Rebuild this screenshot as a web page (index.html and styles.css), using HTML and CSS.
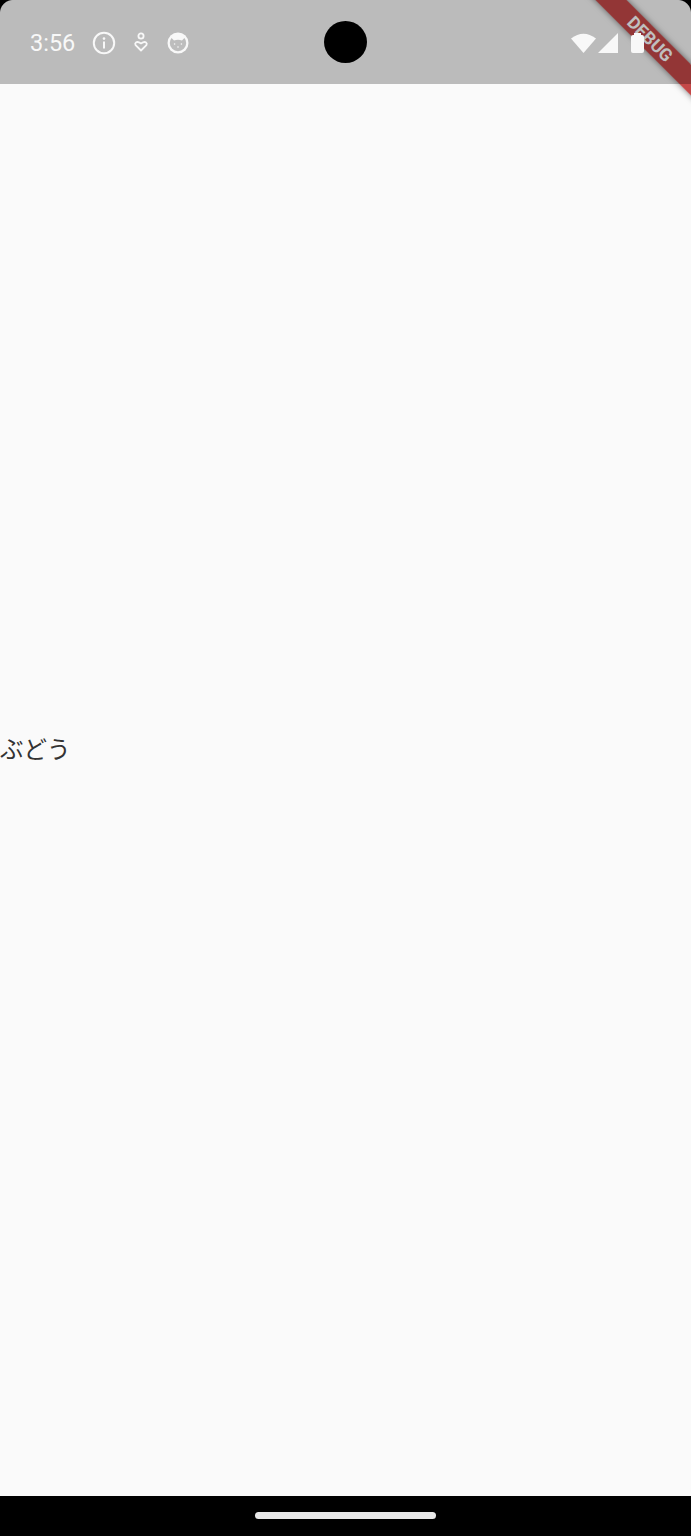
FILE: index.html
```html
<!DOCTYPE html>
<html lang="ja">
<head>
    <meta charset="UTF-8">
    <title>ぶどう</title>
    <link rel="stylesheet" href="styles.css">
</head>
<body>
    <div class="screen">
        <main class="app">
            <div class="word">ぶどう</div>
            <div class="debug-ribbon">DEBUG</div>
        </main>

        <div class="status-bar">
            <div class="status-left">
                <span class="clock">3:56</span>
                <svg class="icon" width="24" height="24" viewBox="0 0 24 24">
                    <circle cx="12" cy="12" r="10.2" fill="none" stroke="#f8f8f8" stroke-width="2"/>
                    <rect x="11" y="10.5" width="2" height="7" fill="#f8f8f8"/>
                    <circle cx="12" cy="7.6" r="1.3" fill="#f8f8f8"/>
                </svg>
                <svg class="icon" width="24" height="24" viewBox="0 0 24 24">
                    <circle cx="12" cy="5" r="2.6" fill="none" stroke="#f8f8f8" stroke-width="1.8"/>
                    <path d="M12 19.5 L6.6 14.2 Q5.6 12.6 7 11.4 Q8.8 10.2 12 12.4 Q15.2 10.2 17 11.4 Q18.4 12.6 17.4 14.2 Z" fill="none" stroke="#f8f8f8" stroke-width="1.8" stroke-linejoin="round"/>
                </svg>
                <svg class="icon" width="24" height="24" viewBox="0 0 24 24">
                    <circle cx="12" cy="12" r="10.5" fill="#f8f8f8"/>
                    <path d="M3.8 12 Q3.8 9 5.6 7 L8 9.4 Q12 8.2 16 9.4 L18.4 7 Q20.2 9 20.2 12 A8.2 8.2 0 0 1 3.8 12 Z" fill="#bdbdbd"/>
                    <circle cx="8.6" cy="13" r="0.8" fill="#f8f8f8"/>
                    <circle cx="15.4" cy="13" r="0.8" fill="#f8f8f8"/>
                    <circle cx="12" cy="16" r="0.8" fill="#f8f8f8"/>
                </svg>
            </div>
            <div class="camera"></div>
            <div class="status-right">
                <svg width="25" height="20" viewBox="0 0 25 20">
                    <path d="M0 5.5 Q12.5 -4 25 5.5 L12.5 20 Z" fill="#f8f8f8"/>
                </svg>
                <svg width="20" height="20" viewBox="0 0 20 20">
                    <path d="M0 20 L20 0 V20 Z" fill="#f8f8f8"/>
                </svg>
                <div class="battery"></div>
            </div>
        </div>

        <div class="corner corner-left"></div>
        <div class="corner corner-right"></div>

        <nav class="nav-bar">
            <div class="home-pill"></div>
        </nav>
    </div>
</body>
</html>
```

FILE: styles.css
```css
html, body {
    margin: 0;
    height: 100%;
    background-color: #000;
}

.screen {
    position: relative;
    display: flex;
    flex-direction: column;
    height: 1536px;
    overflow: hidden;
}

.app {
    position: relative;
    flex: 1;
    display: flex;
    align-items: center;
    overflow: hidden;
    background-color: #fafafa;
}

.word {
    font-family: "Noto Sans CJK JP", sans-serif;
    font-size: 23.5px;
    line-height: 32px;
    color: #333;
}

.debug-ribbon {
    position: absolute;
    top: 28px;
    left: 550px;
    width: 200px;
    height: 22px;
    line-height: 22px;
    text-align: center;
    transform: rotate(45deg);
    font-family: Roboto, sans-serif;
    font-size: 17.5px;
    font-weight: 700;
    color: #fff;
    background-color: rgba(183, 28, 28, 0.8);
    box-shadow: 0 0 6px rgba(0, 0, 0, 0.5);
}

.status-bar {
    position: absolute;
    top: 0;
    left: 0;
    right: 0;
    height: 84px;
    display: flex;
    align-items: center;
    justify-content: space-between;
    padding: 2px 47px 0 30px;
    box-sizing: border-box;
    background-color: rgba(0, 0, 0, 0.25);
}

.status-left {
    display: flex;
    align-items: center;
    gap: 13px;
}

.clock {
    font-family: Roboto, sans-serif;
    font-size: 23.5px;
    color: #f8f8f8;
    margin-right: 4px;
}

.camera {
    position: absolute;
    top: 21px;
    left: 324px;
    width: 43px;
    height: 42px;
    border-radius: 50%;
    background-color: #000;
}

.status-right {
    display: flex;
    align-items: center;
    gap: 2px;
}

.battery {
    position: relative;
    width: 13px;
    height: 18px;
    margin: 2px 0 0 11px;
    border-radius: 2px;
    background-color: #f8f8f8;
}

.battery::before {
    content: "";
    position: absolute;
    top: -2px;
    left: 3px;
    width: 7px;
    height: 2px;
    background-color: #f8f8f8;
}

.corner {
    position: absolute;
    top: 0;
    width: 13px;
    height: 13px;
}

.corner-left {
    left: 0;
    background: radial-gradient(circle at 100% 100%, transparent 12.5px, #000 13.5px);
}

.corner-right {
    right: 0;
    background: radial-gradient(circle at 0 100%, transparent 12.5px, #000 13.5px);
}

.nav-bar {
    height: 40px;
    display: flex;
    justify-content: center;
    align-items: flex-end;
    padding-bottom: 17px;
    box-sizing: border-box;
    background-color: #000;
}

.home-pill {
    width: 181px;
    height: 7px;
    border-radius: 4px;
    background-color: #e8e8e8;
}
```
